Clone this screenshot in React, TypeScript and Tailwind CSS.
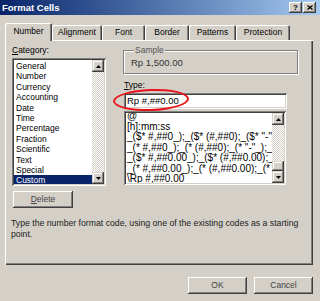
import React from "react";

const categories = [
  "General",
  "Number",
  "Currency",
  "Accounting",
  "Date",
  "Time",
  "Percentage",
  "Fraction",
  "Scientific",
  "Text",
  "Special",
  "Custom",
];

const formats = [
  "@",
  "[h]:mm:ss",
  '_($* #,##0_);_($* (#,##0);_($* "-"_);_(@_)',
  '_(* #,##0_);_(* (#,##0);_(* "-"_);_(@_)',
  '_($* #,##0.00_);_($* (#,##0.00);_($* "-"??_);_(@_)',
  '_(* #,##0.00_);_(* (#,##0.00);_(* "-"??_);_(@_)',
  "\\Rp #,##0.00",
];

function ArrowBtn({ down }: { down?: boolean }) {
  return (
    <div className="w-[12px] h-[12px] shrink-0 bg-[#d4d0c8] shadow-[inset_-1px_-1px_#404040,inset_1px_1px_#d4d0c8,inset_-2px_-2px_#808080,inset_2px_2px_#ffffff] flex items-center justify-center">
      <svg width="5" height="3" viewBox="0 0 5 3">
        <path d={down ? "M0 0H5L2.5 3Z" : "M0 3H5L2.5 0Z"} fill="#000" />
      </svg>
    </div>
  );
}

function Tab({ label, w, selected }: { label: string; w: string; selected?: boolean }) {
  if (selected) {
    return (
      <div
        className={`${w} h-[18px] mb-[-1px] relative z-10 bg-[#d4d0c8] rounded-t-[2px] shadow-[inset_1px_1px_#ffffff,inset_-1px_0_#404040,inset_-2px_0_#808080] flex items-center justify-center pb-[1px]`}
      >
        {label}
      </div>
    );
  }
  return (
    <div
      className={`${w} h-[15px] bg-[#d4d0c8] rounded-t-[2px] shadow-[inset_1px_1px_#ffffff,inset_-1px_0_#404040,inset_-2px_0_#808080] flex items-center justify-center`}
    >
      {label}
    </div>
  );
}

export default function App() {
  return (
    <div className="w-[320px] h-[301px] bg-[#d4d0c8] flex flex-col font-['Liberation_Sans',Arial,sans-serif] text-[8.5px] text-black overflow-hidden">
      {/* Title bar */}
      <div className="h-[15px] shrink-0 bg-linear-to-r from-[#0a246a] to-[#a6caf0] flex items-center pl-[2px] pr-[4px]">
        <span className="text-white font-bold text-[9.5px] leading-none">Format Cells</span>
        <div className="ml-auto flex gap-[1px]">
          <div className="w-[13px] h-[11px] bg-[#d4d0c8] shadow-[inset_-1px_-1px_#404040,inset_1px_1px_#ffffff,inset_-2px_-2px_#808080] flex items-center justify-center text-[8px] font-bold leading-none">
            ?
          </div>
          <div className="w-[13px] h-[11px] bg-[#d4d0c8] shadow-[inset_-1px_-1px_#404040,inset_1px_1px_#ffffff,inset_-2px_-2px_#808080] flex items-center justify-center">
            <svg width="6" height="5" viewBox="0 0 6 5">
              <path d="M0.5 0.5L5.5 4.5M5.5 0.5L0.5 4.5" stroke="#000" strokeWidth="1.3" />
            </svg>
          </div>
        </div>
      </div>

      {/* Tabs */}
      <div className="mt-[8px] pl-[5px] flex items-end">
        <Tab label="Number" w="w-[47px]" selected />
        <Tab label="Alignment" w="w-[50px]" />
        <Tab label="Font" w="w-[43px]" />
        <Tab label="Border" w="w-[44px]" />
        <Tab label="Patterns" w="w-[47px]" />
        <Tab label="Protection" w="w-[54px]" />
      </div>

      {/* Panel */}
      <div className="ml-[5px] w-[308px] h-[225px] shrink-0 shadow-[inset_1px_1px_#ffffff,inset_-1px_-1px_#404040,inset_-2px_-2px_#808080] pt-[5px] pl-[6px] flex flex-col">
        <div className="flex items-start">
          {/* Left column */}
          <div className="w-[95px] pl-[1px] flex flex-col">
            <div className="h-[10px] leading-[10px]">
              <span className="underline">C</span>ategory:
            </div>
            <div className="mt-[3px] w-[94px] h-[128px] bg-white p-[2px] flex shadow-[inset_1px_1px_#808080,inset_-1px_-1px_#ffffff,inset_2px_2px_#404040,inset_-2px_-2px_#d4d0c8]">
              <div className="flex-1 flex flex-col overflow-hidden pt-[1px]">
                {categories.map((c) => (
                  <div
                    key={c}
                    className={
                      c === "Custom"
                        ? "h-[10.4px] shrink-0 leading-[10.4px] pl-[2px] bg-[#0a246a] text-white"
                        : "h-[10.4px] shrink-0 leading-[10.4px] pl-[2px]"
                    }
                  >
                    {c}
                  </div>
                ))}
              </div>
              <div className="w-[12px] flex flex-col bg-[image:repeating-conic-gradient(#d4d0c8_0_25%,#ffffff_0_50%)] bg-[length:2px_2px]">
                <ArrowBtn />
                <div className="flex-1" />
                <ArrowBtn down />
              </div>
            </div>
            <div className="mt-[5px] ml-[1px] w-[60px] h-[17px] flex items-center justify-center shadow-[inset_-1px_-1px_#404040,inset_1px_1px_#ffffff,inset_-2px_-2px_#808080]">
              <span className="text-[#444]">
                <span className="underline">D</span>elete
              </span>
            </div>
          </div>

          {/* Right column */}
          <div className="ml-[17px] w-[176px] flex flex-col">
            <fieldset className="w-[175px] h-[29px] border border-[#808080] shadow-[1px_1px_0_#ffffff,inset_1px_1px_0_#ffffff] pl-[7px]">
              <legend className="ml-[3px] px-[1px] bg-[#d4d0c8] text-[#555] leading-[10px]">Sample</legend>
              <div className="leading-[10px] mt-[3px] text-[#333] text-[9.5px]">Rp 1,500.00</div>
            </fieldset>
            <div className="mt-[6px] ml-[1px] h-[10px] leading-[10px]">
              <span className="underline">T</span>ype:
            </div>
            <div className="relative mt-[3px] ml-[1px] w-[163px] h-[16px] bg-white shadow-[inset_1px_1px_#808080,inset_-1px_-1px_#ffffff,inset_2px_2px_#404040,inset_-2px_-2px_#d4d0c8] flex items-center pl-[3px] text-[9.5px]">
              <span>Rp #,##0.00</span>
              <div className="absolute left-[-11px] top-[-4px] w-[76px] h-[22px] rounded-[50%] border-2 border-[#e8141c] rotate-[-2deg]" />
            </div>
            <div className="mt-[2px] ml-[1px] w-[162px] h-[74px] bg-white p-[2px] flex shadow-[inset_1px_1px_#808080,inset_-1px_-1px_#ffffff,inset_2px_2px_#404040,inset_-2px_-2px_#d4d0c8]">
              <div className="flex-1 flex flex-col overflow-hidden pl-[1px] text-[10px]">
                {formats.map((f, i) => (
                  <div
                    key={i}
                    className={
                      i === 0
                        ? "h-[9px] shrink-0 leading-[6px] whitespace-nowrap overflow-hidden"
                        : "h-[10.4px] shrink-0 leading-[10.4px] whitespace-nowrap"
                    }
                  >
                    {f}
                  </div>
                ))}
              </div>
              <div className="w-[12px] flex flex-col bg-[image:repeating-conic-gradient(#d4d0c8_0_25%,#ffffff_0_50%)] bg-[length:2px_2px]">
                <ArrowBtn />
                <div className="flex-1" />
                <div className="w-[12px] h-[10px] bg-[#d4d0c8] shadow-[inset_-1px_-1px_#404040,inset_1px_1px_#d4d0c8,inset_-2px_-2px_#808080,inset_2px_2px_#ffffff]" />
                <ArrowBtn down />
              </div>
            </div>
          </div>
        </div>

        <div className="mt-[10px] leading-[11px] text-[#222] text-[8.7px] w-[298px]">
          Type the number format code, using one of the existing codes as a starting point.
        </div>
      </div>

      {/* Buttons */}
      <div className="mt-[12px] flex justify-end gap-[7px] pr-[7px]">
        <div className="w-[59px] h-[17px] flex items-center justify-center text-[#444] shadow-[inset_-1px_-1px_#404040,inset_1px_1px_#ffffff,inset_-2px_-2px_#808080]">
          OK
        </div>
        <div className="w-[59px] h-[17px] flex items-center justify-center text-[#444] shadow-[inset_-1px_-1px_#404040,inset_1px_1px_#ffffff,inset_-2px_-2px_#808080]">
          Cancel
        </div>
      </div>
    </div>
  );
}
